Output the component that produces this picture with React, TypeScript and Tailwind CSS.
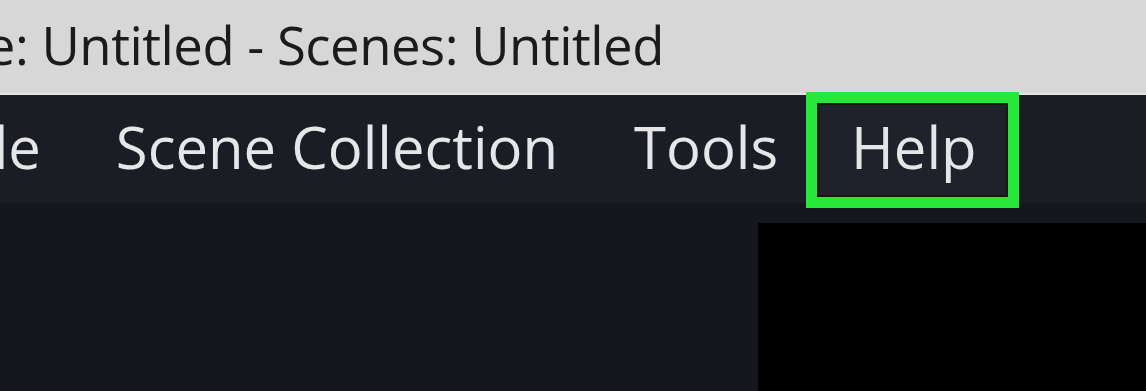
import React from "react";

export default function App() {
  const font = { fontFamily: '"Open Sans", "Noto Sans", "Liberation Sans", sans-serif' };
  return (
    <div className="w-[1146px] h-[391px] overflow-hidden flex flex-col bg-[#16171d]" style={font}>
      <div className="h-[95px] shrink-0 bg-[#d7d7d7] border-b-[2px] border-[#e4e4e4] flex items-center overflow-hidden">
        <div className="ml-[-124px] whitespace-nowrap text-[52.7px] leading-none text-[#1b1b1b] tracking-[-0.5px] pb-[2px]">
          Mode: Untitled - Scenes: Untitled
        </div>
      </div>
      <div className="h-[108px] shrink-0 bg-[#1b1d24] flex items-stretch overflow-visible">
        <div className="ml-[-134px] flex items-stretch whitespace-nowrap text-[58px] leading-none text-[#e6e6e8]">
          <span className="flex items-center pb-[4px] pr-[75px]">Profile</span>
          <span className="flex items-center pb-[4px] pr-[76px]">Scene Collection</span>
          <span className="flex items-center pb-[4px] pr-[73px]">Tools</span>
          <span className="relative flex items-center pb-[4px]">
            <span className="absolute left-[-45px] right-[-42px] top-[-3px] bottom-[-5px] border-[11px] border-[#26e83a] bg-[#20222b] shadow-[inset_0_0_0_2px_#0c1a10]" />
            <span className="relative">Help</span>
          </span>
        </div>
      </div>
      <div className="flex-1 flex pt-[20px]">
        <div className="w-[758px] shrink-0" />
        <div className="flex-1 bg-black" />
      </div>
    </div>
  );
}
